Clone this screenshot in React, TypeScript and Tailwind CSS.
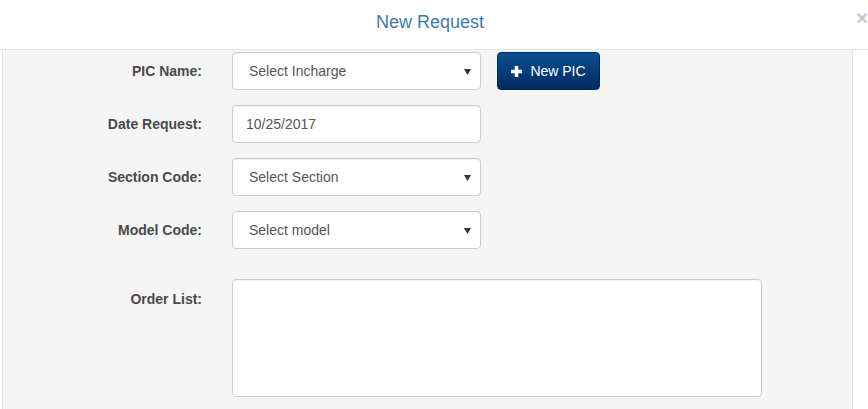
import type { ReactNode } from "react";

function Row({ label, children, top }: { label: string; children: ReactNode; top?: boolean }) {
  return (
    <div className={`flex ${top ? "items-start" : "items-center"}`}>
      <label
        className={`w-[199px] shrink-0 text-right text-[14px] font-bold text-[#4a4a4a] ${top ? "pt-[10px]" : ""}`}
      >
        {label}
      </label>
      <div className="ml-[30px] flex items-center gap-[16px]">{children}</div>
    </div>
  );
}

function SelectBox({ placeholder }: { placeholder: string }) {
  return (
    <div className="flex h-[38px] w-[249px] items-center justify-between rounded-[4px] border border-[#cccccc] bg-white pl-[16px] pr-[9px] text-[14px] text-[#555555] shadow-[inset_0_1px_1px_rgba(0,0,0,0.05)]">
      <span>{placeholder}</span>
      <svg width="7" height="6" viewBox="0 0 7 6" className="mt-[1px]">
        <path d="M0 0h7L3.5 6z" fill="#333333" />
      </svg>
    </div>
  );
}

export default function App() {
  return (
    <div
      className="h-[409px] w-[868px] overflow-hidden bg-white"
      style={{ fontFamily: '"Liberation Sans", Arial, sans-serif' }}
    >
      {/* Modal header */}
      <div className="relative flex h-[50px] items-center justify-center border-b border-[#e5e5e5]">
        <h4 className="mb-[5px] mr-[8px] text-[18px] text-[#3b7ab2]">New Request</h4>
        <span className="absolute right-0 top-[8px] text-[20px] font-bold leading-none text-[#c8c8c8]">×</span>
      </div>

      {/* Modal body */}
      <div className="ml-[2px] flex h-[400px] w-[851px] flex-col border-x border-[#e3e3e3] bg-[#f5f5f5] pt-[2px]">
        <div className="flex flex-col gap-[15px]">
          <Row label="PIC Name:">
            <SelectBox placeholder="Select Incharge" />
            <button className="flex h-[38px] w-[103px] items-center justify-center gap-[8px] rounded-[4px] border border-[#002a5c] bg-gradient-to-b from-[#0c4f92] to-[#002c61] text-[14px] text-white">
              <svg width="11" height="11" viewBox="0 0 10 10">
                <path d="M3.4 0h3.2v3.4H10v3.2H6.6V10H3.4V6.6H0V3.4h3.4z" fill="#ffffff" />
              </svg>
              New PIC
            </button>
          </Row>
          <Row label="Date Request:">
            <div className="flex h-[38px] w-[249px] items-center rounded-[4px] border border-[#cccccc] bg-white pl-[13px] text-[14px] text-[#555555] shadow-[inset_0_1px_1px_rgba(0,0,0,0.05)]">
              10/25/2017
            </div>
          </Row>
          <Row label="Section Code:">
            <SelectBox placeholder="Select Section" />
          </Row>
          <Row label="Model Code:">
            <SelectBox placeholder="Select model" />
          </Row>
        </div>
        <div className="mt-[30px]">
          <Row label="Order List:" top>
            <div className="h-[118px] w-[530px] rounded-[4px] border border-[#cccccc] bg-white shadow-[inset_0_1px_1px_rgba(0,0,0,0.05)]" />
          </Row>
        </div>
      </div>
    </div>
  );
}
